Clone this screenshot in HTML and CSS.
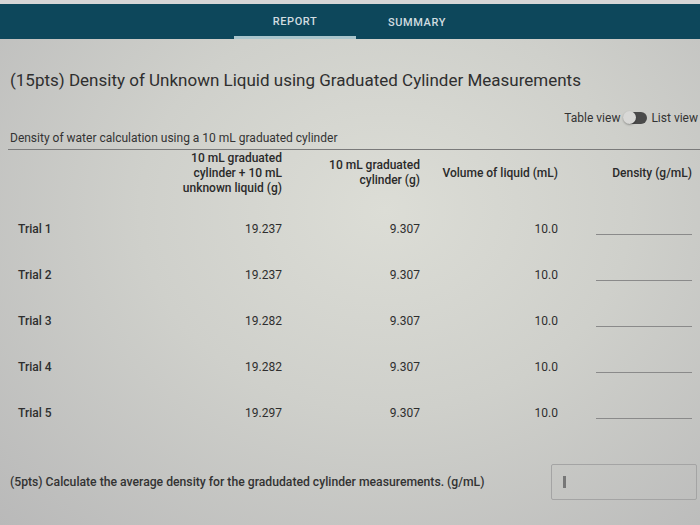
FILE: index.html
```html
<!DOCTYPE html>
<html lang="en">
<head>
  <meta charset="UTF-8">
  <title>Density of Unknown Liquid</title>
  <link rel="stylesheet" href="styles.css">
</head>
<body>
  <div class="topbar">
    <nav class="tabs">
      <div class="tab active">REPORT</div>
      <div class="tab">SUMMARY</div>
    </nav>
  </div>

  <main class="page">
    <h1 class="title">(15pts) Density of Unknown Liquid using Graduated Cylinder Measurements</h1>

    <div class="view-switch">
      <span>Table view</span>
      <span class="toggle"><span class="knob"></span></span>
      <span>List view</span>
    </div>

    <div class="caption">Density of water calculation using a 10 mL graduated cylinder</div>

    <div class="grid">
      <div class="head"></div>
      <div class="head num">10 mL graduated<br>cylinder + 10 mL<br>unknown liquid (g)</div>
      <div class="head num">10 mL graduated<br>cylinder (g)</div>
      <div class="head num">Volume of liquid (mL)</div>
      <div class="head num">Density (g/mL)</div>

      <div class="label">Trial 1</div>
      <div class="num">19.237</div>
      <div class="num">9.307</div>
      <div class="num">10.0</div>
      <div class="blank"><span class="line"></span></div>

      <div class="label">Trial 2</div>
      <div class="num">19.237</div>
      <div class="num">9.307</div>
      <div class="num">10.0</div>
      <div class="blank"><span class="line"></span></div>

      <div class="label">Trial 3</div>
      <div class="num">19.282</div>
      <div class="num">9.307</div>
      <div class="num">10.0</div>
      <div class="blank"><span class="line"></span></div>

      <div class="label">Trial 4</div>
      <div class="num">19.282</div>
      <div class="num">9.307</div>
      <div class="num">10.0</div>
      <div class="blank"><span class="line"></span></div>

      <div class="label">Trial 5</div>
      <div class="num">19.297</div>
      <div class="num">9.307</div>
      <div class="num">10.0</div>
      <div class="blank"><span class="line"></span></div>
    </div>

    <div class="question">
      <span>(5pts) Calculate the average density for the gradudated cylinder measurements. (g/mL)</span>
      <div class="answer"><span class="caret"></span></div>
    </div>
  </main>
</body>
</html>
```

FILE: styles.css
```css
body {
  margin: 0;
  font-family: Roboto, "Liberation Sans", sans-serif;
  color: #2e2e2e;
  background: radial-gradient(ellipse at 55% 40%, #dcddd6 0%, #cfd0cb 45%, #b9b9b9 100%);
  height: 525px;
  overflow: hidden;
}
.topbar {
  border-top: 4px solid #d6d6d6;
  background: #0d475b;
  height: 35px;
}
.tabs {
  display: flex;
  justify-content: center;
  padding-left: 12px;
  height: 100%;
}
.tab {
  width: 122px;
  display: flex;
  align-items: center;
  justify-content: center;
  font-size: 11px;
  font-weight: 500;
  letter-spacing: 0.6px;
  color: #d2dde0;
  box-sizing: border-box;
  padding-top: 2px;
}
.tab.active {
  border-bottom: 3px solid #a9c5cc;
}
.page {
  padding: 0 8px;
}
.title {
  margin: 31px 0 0 2px;
  font-size: 17px;
  font-weight: 400;
  color: #2f2f2f;
}
.view-switch {
  display: flex;
  justify-content: flex-end;
  align-items: center;
  gap: 3px;
  margin-top: 21px;
  margin-right: -6px;
  font-size: 12px;
  color: #333;
}
.toggle {
  width: 22px;
  height: 12px;
  border-radius: 6px;
  background: #4a4a4a;
  position: relative;
  margin: 0 1px 0 2px;
}
.knob {
  position: absolute;
  left: -2px;
  top: -1px;
  width: 13px;
  height: 13px;
  border-radius: 50%;
  background: #d8d8d6;
  box-shadow: 0 1px 2px rgba(0,0,0,0.3);
}
.caption {
  margin-top: 6px;
  padding: 0 0 4px 2px;
  font-size: 12px;
  color: #333;
  border-bottom: 1px solid #7a7a7a;
  margin-right: -8px;
}
.grid {
  display: grid;
  grid-template-columns: 140px 134px 138px 138px 134px;
  grid-template-rows: 56px;
  grid-auto-rows: 46px;
  font-size: 12px;
}
.grid .head {
  height: 50px;
  margin-top: -2px;
  font-weight: 500;
  line-height: 15px;
  color: #2a2a2a;
}
.num {
  display: flex;
  align-items: center;
  justify-content: flex-end;
  text-align: right;
}
.label {
  display: flex;
  align-items: center;
  padding-left: 10px;
  font-weight: 500;
}
.blank {
  display: flex;
  align-items: center;
  justify-content: flex-end;
}
.line {
  width: 96px;
  height: 1px;
  background: #8a8a8a;
  margin-top: 11px;
}
.question {
  display: flex;
  align-items: center;
  justify-content: space-between;
  margin-top: 28px;
  margin-right: -5px;
  font-size: 12.2px;
  font-weight: 500;
  color: #333;
}
.question span {
  padding-left: 2px;
}
.answer {
  width: 146px;
  height: 36px;
  border: 1px solid #a4a4a4;
  border-radius: 2px;
  display: flex;
  align-items: center;
  padding-left: 11px;
  box-sizing: border-box;
}
.caret {
  width: 1px;
  height: 12px;
  background: #777;
}
```
